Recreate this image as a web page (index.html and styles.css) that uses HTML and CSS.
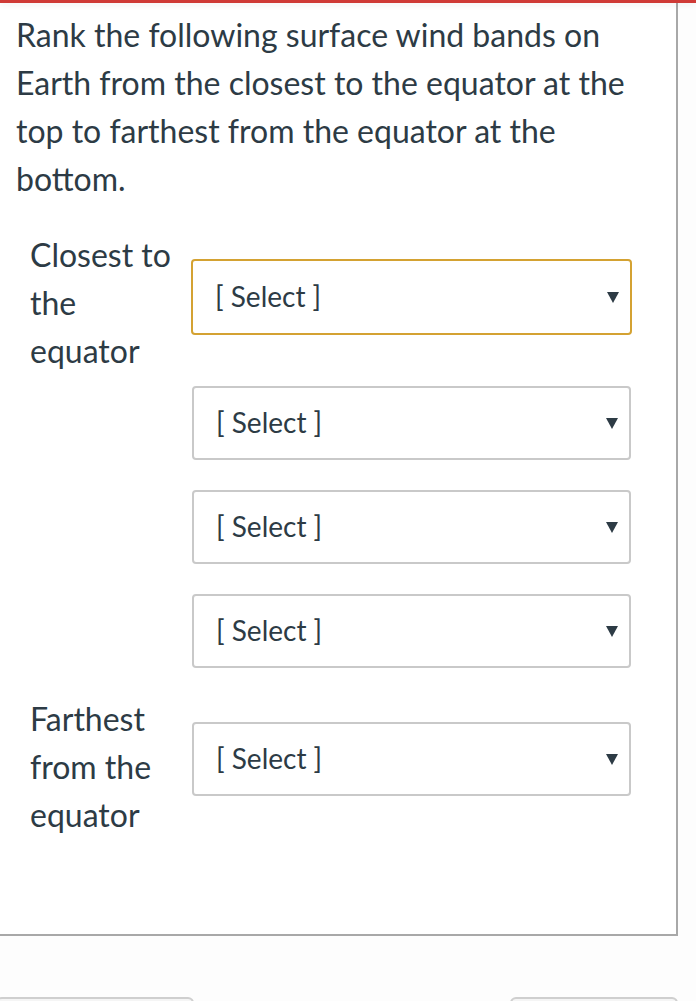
FILE: index.html
```html
<!DOCTYPE html>
<html>
<head>
<meta charset="utf-8">
<link rel="stylesheet" href="styles.css">
</head>
<body>
<div class="topbar"></div>
<div class="card">
  <p class="question">Rank the following surface wind bands on Earth from the closest to the equator at the top to farthest from the equator at the bottom.</p>
  <div class="rows">
    <div class="row">
      <div class="label">Closest to the equator</div>
      <div class="select focused"><span>[ Select ]</span><span class="arrow"></span></div>
    </div>
    <div class="row">
      <div class="label"></div>
      <div class="select"><span>[ Select ]</span><span class="arrow"></span></div>
    </div>
    <div class="row">
      <div class="label"></div>
      <div class="select"><span>[ Select ]</span><span class="arrow"></span></div>
    </div>
    <div class="row">
      <div class="label"></div>
      <div class="select"><span>[ Select ]</span><span class="arrow"></span></div>
    </div>
    <div class="row">
      <div class="label">Farthest from the equator</div>
      <div class="select"><span>[ Select ]</span><span class="arrow"></span></div>
    </div>
  </div>
</div>
<div class="footer">
  <div class="btn btn-left"></div>
  <div class="btn btn-right"></div>
</div>
</body>
</html>
```
FILE: styles.css
```css
html, body {
  margin: 0;
  padding: 0;
  background: #fdfdfd;
  width: 696px;
  height: 1001px;
  overflow: hidden;
  font-family: Lato, "Liberation Sans", sans-serif;
  color: #2d3b45;
}
.topbar {
  height: 3px;
  background: #cf3a36;
  box-shadow: 0 2px 6px rgba(0,0,0,0.08);
  position: relative;
  z-index: 1;
}
.card {
  box-sizing: border-box;
  width: 678px;
  height: 933px;
  background: #fff;
  border-right: 2px solid #a8a8a8;
  border-bottom: 2px solid #a8a8a8;
  padding: 8px 0 0 16px;
}
.question {
  margin: 0;
  width: 620px;
  font-size: 32px;
  line-height: 48px;
}
.rows {
  margin-top: 31px;
  display: flex;
  flex-direction: column;
  gap: 14px;
}
.row {
  display: flex;
  align-items: center;
}
.label {
  width: 146px;
  padding-left: 14px;
  font-size: 32px;
  line-height: 48px;
  margin: -3px 0;
}
.select {
  box-sizing: border-box;
  width: 439px;
  height: 74px;
  margin-left: 16px;
  margin-bottom: 16px;
  border: 2px solid #c9c9c9;
  border-radius: 4px;
  display: flex;
  align-items: center;
  justify-content: space-between;
  padding: 0 11px 0 22px;
  font-size: 28px;
}
.select span:first-child {
  position: relative;
  top: -1px;
}
.select.focused {
  border-color: #d4a232;
  height: 76px;
  margin-left: 15px;
  width: 441px;
  margin-bottom: 12px;
}
.arrow {
  width: 0;
  height: 0;
  border-left: 6px solid transparent;
  border-right: 6px solid transparent;
  border-top: 11px solid #2d3b45;
}
.footer {
  display: flex;
  justify-content: space-between;
  padding-top: 61px;
  width: 678px;
}
.btn {
  height: 20px;
  border: 2px solid #cfcfcf;
  border-radius: 6px;
  background: #f5f5f5;
}
.btn-left { width: 194px; margin-left: -4px; }
.btn-right { width: 164px; }
```
